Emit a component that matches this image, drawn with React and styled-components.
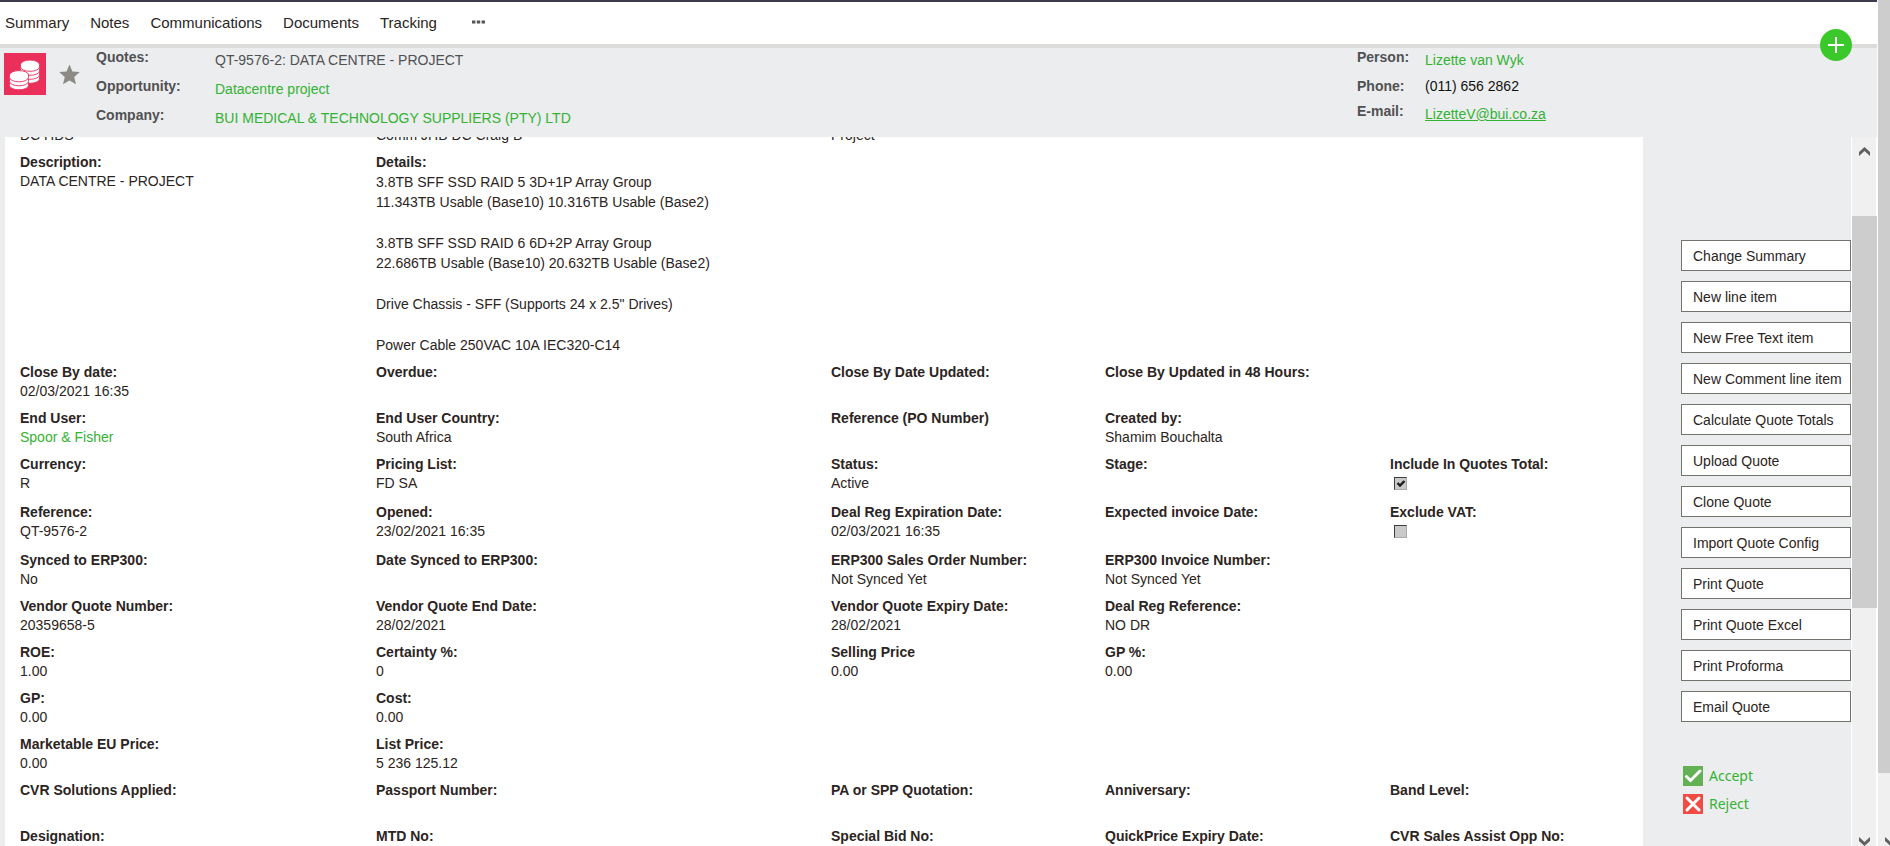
import React from 'react';
import styled, { createGlobalStyle } from 'styled-components';

const GlobalStyle = createGlobalStyle`
  * {
    box-sizing: border-box;
  }
  body {
    margin: 0;
    background: #ebedee;
    color: #2b2422;
    font-family: "Liberation Sans", Arial, sans-serif;
    font-size: 14px;
  }
`;

const Page = styled.div`
  display: flex;
  height: 100vh;
  overflow: hidden;
`;
const Main = styled.div`
  position: relative;
  display: flex;
  flex: 1;
  flex-direction: column;
  min-width: 0;
`;

const Nav = styled.nav`
  display: flex;
  flex: none;
  align-items: center;
  gap: 21px;
  height: 48px;
  padding: 0 5px 4px;
  background: #fff;
  border-top: 2px solid #3b3b4b;
  border-bottom: 4px solid #dcdcda;
`;
const NavLink = styled.a`
  padding-top: 2px;
  color: #2b2422;
  font-size: 15px;
  text-decoration: none;
`;
const MoreButton = styled.button`
  display: flex;
  margin-left: 14px;
  padding: 2px 0 0;
  background: none;
  border: 0;
`;
const AddButton = styled.button`
  position: absolute;
  top: 29px;
  right: 25px;
  width: 32px;
  height: 32px;
  padding: 0;
  background: #3ac82b;
  border: 0;
  border-radius: 50%;
`;

const Banner = styled.header`
  display: flex;
  flex: none;
  height: 89px;
  padding-left: 4px;
`;
const LogoTile = styled.div`
  width: 42px;
  height: 42px;
  margin-top: 5px;
  background: #eb2f5b;
`;
const StarButton = styled.button`
  width: 21px;
  height: 21px;
  margin: 16px 16px 0 13px;
  padding: 0;
  background: none;
  border: 0;
`;
const InfoList = styled.dl`
  display: grid;
  flex: ${(props) => props.$grow};
  grid-template-columns: ${(props) => props.$labelWidth} 1fr;
  grid-template-rows: 29px ${(props) => props.$rowHeight} ${(props) => props.$rowHeight};
  margin: 0;
  color: #505155;
  line-height: 18px;
`;
const InfoLabel = styled.dt`
  font-weight: bold;
`;
const InfoValue = styled.dd`
  margin: 0;
  padding-top: ${(props) => (props.$plain ? '0' : '3px')};
  color: ${(props) => (props.$plain ? '#111' : 'inherit')};
`;
const GreenLink = styled.a`
  color: #34b233;
  text-decoration: ${(props) => (props.$underline ? 'underline' : 'none')};
`;

const Body = styled.div`
  display: flex;
  flex: 1;
  min-height: 0;
  overflow: hidden;
  padding-left: 5px;
`;
const Panel = styled.main`
  flex: 1;
  overflow: hidden;
  background: #fff;
  padding-left: 15px;
`;
/* the form is scrolled part of the way into its first row */
const Form = styled.div`
  margin-top: -30px;
`;
const Row = styled.div`
  display: grid;
  grid-template-columns: 356fr 455fr 274fr 285fr 253fr;
  min-height: ${(props) => (props.$tall ? '48px' : '46px')};
  padding-bottom: 8px;
`;
const Field = styled.div`
  min-width: 0;
`;
const FieldLabel = styled.label`
  display: block;
  font-weight: bold;
  line-height: 19px;
`;
const FieldValue = styled.div`
  line-height: 18px;
`;
const Details = styled.div`
  display: flex;
  flex-direction: column;
  gap: 21px;
  line-height: 20px;
`;
const CheckWrap = styled.span`
  position: relative;
  display: block;
  width: 13px;
  height: 13px;
  margin: 3px 4px;

  svg {
    position: absolute;
    top: 0;
    left: 0;
  }
`;
const Checkbox = styled.input`
  appearance: none;
  display: block;
  width: 13px;
  height: 13px;
  margin: 0;
  background: #c9c9c9;
  border: 1px solid #a9a9a9;
  border-top-color: #3c3c3c;
  border-left-color: #3c3c3c;
`;

const Sidebar = styled.aside`
  flex: none;
  width: 208px;
  padding: 103px 0 0 38px;
`;
const ButtonList = styled.div`
  display: flex;
  flex-direction: column;
  gap: 10px;
`;
const ActionButton = styled.button`
  height: 31px;
  padding: 0 0 0 11px;
  background: #fff;
  border: 1px solid #74746e;
  color: #2b2422;
  font: 14px "Liberation Sans", Arial, sans-serif;
  text-align: left;
  white-space: nowrap;
`;
const Decision = styled.div`
  display: flex;
  flex-direction: column;
  align-items: flex-start;
  gap: 8px;
  margin: 44px 0 0 2px;
`;
const DecisionLink = styled.a`
  display: flex;
  align-items: center;
  gap: 6px;
  height: 20px;
  color: #34b233;
  font: 14px/20px "Noto Sans", "Open Sans", sans-serif;
  text-decoration: none;
`;

const ScrollTrack = styled.div`
  display: grid;
  flex: none;
  grid-template-rows: 79px 392fr 238fr;
  width: 26px;
  background: #f0f0f0;
  border: solid #fff;
  border-width: 0 1px;
`;
const PageScroll = styled.div`
  display: grid;
  flex: none;
  grid-template-rows: 773fr 73fr;
  width: 13px;
  overflow: hidden;
  background: #f0f0f0;
  border-left: 1px solid #fff;
`;
const Thumb = styled.div`
  background: #cdcdcd;
`;
const ArrowSlot = styled.div`
  display: flex;
  align-items: ${(props) => (props.$bottom ? 'flex-end' : 'flex-start')};
  padding: ${(props) => (props.$bottom ? '0 7px' : '10px 7px')};
`;

const navItems = ['Summary', 'Notes', 'Communications', 'Documents', 'Tracking'];

const details = [
  ['3.8TB SFF SSD RAID 5 3D+1P Array Group', '11.343TB Usable (Base10) 10.316TB Usable (Base2)'],
  ['3.8TB SFF SSD RAID 6 6D+2P Array Group', '22.686TB Usable (Base10) 20.632TB Usable (Base2)'],
  ['Drive Chassis - SFF (Supports 24 x 2.5" Drives)'],
  ['Power Cable 250VAC 10A IEC320-C14'],
];

const rows = [
  {
    fields: [
      { label: '', value: 'DC HDS' },
      { label: '', value: 'Comm JHB DC Craig B' },
      { label: '', value: 'Project' },
    ],
  },
  {
    fields: [
      { label: 'Description:', value: 'DATA CENTRE - PROJECT' },
      { label: 'Details:', details },
    ],
  },
  {
    fields: [
      { label: 'Close By date:', value: '02/03/2021 16:35' },
      { label: 'Overdue:' },
      { label: 'Close By Date Updated:' },
      { label: 'Close By Updated in 48 Hours:' },
    ],
  },
  {
    fields: [
      { label: 'End User:', value: 'Spoor & Fisher', link: true },
      { label: 'End User Country:', value: 'South Africa' },
      { label: 'Reference (PO Number)' },
      { label: 'Created by:', value: 'Shamim Bouchalta' },
    ],
  },
  {
    tall: true,
    fields: [
      { label: 'Currency:', value: 'R' },
      { label: 'Pricing List:', value: 'FD SA' },
      { label: 'Status:', value: 'Active' },
      { label: 'Stage:' },
      { label: 'Include In Quotes Total:', id: 'include-total', checked: true },
    ],
  },
  {
    tall: true,
    fields: [
      { label: 'Reference:', value: 'QT-9576-2' },
      { label: 'Opened:', value: '23/02/2021 16:35' },
      { label: 'Deal Reg Expiration Date:', value: '02/03/2021 16:35' },
      { label: 'Expected invoice Date:' },
      { label: 'Exclude VAT:', id: 'exclude-vat', checked: false },
    ],
  },
  {
    fields: [
      { label: 'Synced to ERP300:', value: 'No' },
      { label: 'Date Synced to ERP300:' },
      { label: 'ERP300 Sales Order Number:', value: 'Not Synced Yet' },
      { label: 'ERP300 Invoice Number:', value: 'Not Synced Yet' },
    ],
  },
  {
    fields: [
      { label: 'Vendor Quote Number:', value: '20359658-5' },
      { label: 'Vendor Quote End Date:', value: '28/02/2021' },
      { label: 'Vendor Quote Expiry Date:', value: '28/02/2021' },
      { label: 'Deal Reg Reference:', value: 'NO DR' },
    ],
  },
  {
    fields: [
      { label: 'ROE:', value: '1.00' },
      { label: 'Certainty %:', value: '0' },
      { label: 'Selling Price', value: '0.00' },
      { label: 'GP %:', value: '0.00' },
    ],
  },
  {
    fields: [
      { label: 'GP:', value: '0.00' },
      { label: 'Cost:', value: '0.00' },
    ],
  },
  {
    fields: [
      { label: 'Marketable EU Price:', value: '0.00' },
      { label: 'List Price:', value: '5 236 125.12' },
    ],
  },
  {
    fields: [
      { label: 'CVR Solutions Applied:' },
      { label: 'Passport Number:' },
      { label: 'PA or SPP Quotation:' },
      { label: 'Anniversary:' },
      { label: 'Band Level:' },
    ],
  },
  {
    fields: [
      { label: 'Designation:' },
      { label: 'MTD No:' },
      { label: 'Special Bid No:' },
      { label: 'QuickPrice Expiry Date:' },
      { label: 'CVR Sales Assist Opp No:' },
    ],
  },
];

const actions = [
  'Change Summary',
  'New line item',
  'New Free Text item',
  'New Comment line item',
  'Calculate Quote Totals',
  'Upload Quote',
  'Clone Quote',
  'Import Quote Config',
  'Print Quote',
  'Print Quote Excel',
  'Print Proforma',
  'Email Quote',
];

const CoinStack = ({ x, y, layers }) => (
  <g transform={`translate(${x} ${y})`}>
    {/* bottom coin first, so each one overlaps the coin below it */}
    {Array.from({ length: layers }, (_, i) => layers - 1 - i).map((i) => (
      <path
        key={i}
        d={`M0 ${i * 4} a9.5 4.4 0 0 1 19 0 v2.4 a9.5 4.4 0 0 1 -19 0 z`}
        fill="#fff"
        stroke="#eb2f5b"
        strokeWidth="0.9"
      />
    ))}
  </g>
);

const CoinsIcon = () => (
  <svg width="42" height="42" viewBox="0 0 42 42">
    <CoinStack x={16.5} y={11.5} layers={4} />
    <CoinStack x={5.5} y={22} layers={3} />
  </svg>
);

const Chevron = ({ down }) => (
  <svg width="11" height="9" viewBox="0 0 11 9">
    <path
      d={down ? 'M0 0 L5.5 5 L11 0 V4 L5.5 9 L0 4 Z' : 'M0 9 L5.5 4 L11 9 V5 L5.5 0 L0 5 Z'}
      fill="#606060"
    />
  </svg>
);

const FieldCell = ({ field }) => (
  <Field>
    <FieldLabel as={field.id ? 'label' : 'div'} htmlFor={field.id}>
      {field.label || '\u00a0'}
    </FieldLabel>
    {field.value && (
      <FieldValue>
        {field.link ? <GreenLink href="#">{field.value}</GreenLink> : field.value}
      </FieldValue>
    )}
    {field.details && (
      <Details>
        {field.details.map((lines) => (
          <div key={lines[0]}>
            {lines.map((line) => (
              <div key={line}>{line}</div>
            ))}
          </div>
        ))}
      </Details>
    )}
    {field.id && (
      <CheckWrap>
        <Checkbox type="checkbox" id={field.id} checked={field.checked} disabled readOnly />
        {field.checked && (
          <svg width="13" height="13" viewBox="0 0 13 13">
            <path d="M3.5 6 L6 8.5 L10.5 4" fill="none" stroke="#1c1c1c" strokeWidth="2.4" />
          </svg>
        )}
      </CheckWrap>
    )}
  </Field>
);

const App = () => (
  <>
    <GlobalStyle />
    <Page>
      <Main>
        <Nav>
          {navItems.map((item) => (
            <NavLink key={item} href="#">{item}</NavLink>
          ))}
          <MoreButton aria-label="More">
            <svg width="13" height="4" viewBox="0 0 13 4">
              <path d="M0 0.5h3.4v3H0z M4.8 0.5h3.4v3H4.8z M9.6 0.5H13v3H9.6z" fill="#555" />
            </svg>
          </MoreButton>
        </Nav>
        <Banner>
          <LogoTile>
            <CoinsIcon />
          </LogoTile>
          <StarButton aria-label="Favourite">
            <svg width="21" height="21" viewBox="0 0 21 21">
              <path
                d="M10.5 0.5 L13.4 7.4 L20.8 8 L15.2 12.9 L17 20.3 L10.5 16.4 L4 20.3 L5.8 12.9 L0.2 8 L7.6 7.4 Z"
                fill="#8b8a84"
              />
            </svg>
          </StarButton>
          <InfoList $grow={1261} $labelWidth="119px" $rowHeight="29px">
            <InfoLabel>Quotes:</InfoLabel>
            <InfoValue>QT-9576-2: DATA CENTRE - PROJECT</InfoValue>
            <InfoLabel>Opportunity:</InfoLabel>
            <InfoValue><GreenLink href="#">Datacentre project</GreenLink></InfoValue>
            <InfoLabel>Company:</InfoLabel>
            <InfoValue>
              <GreenLink href="#">BUI MEDICAL &amp; TECHNOLOGY SUPPLIERS (PTY) LTD</GreenLink>
            </InfoValue>
          </InfoList>
          <InfoList $grow={520} $labelWidth="68px" $rowHeight="25px">
            <InfoLabel>Person:</InfoLabel>
            <InfoValue><GreenLink href="#">Lizette van Wyk</GreenLink></InfoValue>
            <InfoLabel>Phone:</InfoLabel>
            <InfoValue $plain>(011) 656 2862</InfoValue>
            <InfoLabel>E-mail:</InfoLabel>
            <InfoValue><GreenLink $underline href="#">LizetteV@bui.co.za</GreenLink></InfoValue>
          </InfoList>
        </Banner>
        <Body>
          <Panel>
            <Form>
              {rows.map((row, index) => (
                <Row key={index} $tall={row.tall}>
                  {row.fields.map((field, i) => (
                    <FieldCell key={i} field={field} />
                  ))}
                </Row>
              ))}
            </Form>
          </Panel>
          <Sidebar>
            <ButtonList>
              {actions.map((action) => (
                <ActionButton key={action}>{action}</ActionButton>
              ))}
            </ButtonList>
            <Decision>
              <DecisionLink href="#">
                <svg width="20" height="20" viewBox="0 0 20 20">
                  <rect width="20" height="20" fill="#63b155" />
                  <path d="M3.5 10.5 L7.5 14.5 L17 5" fill="none" stroke="#fff" strokeWidth="3" strokeLinecap="round" />
                </svg>
                Accept
              </DecisionLink>
              <DecisionLink href="#">
                <svg width="20" height="20" viewBox="0 0 20 20">
                  <rect width="20" height="20" fill="#f04b45" />
                  <path d="M4 4 L16 16 M16 4 L4 16" stroke="#fff" strokeWidth="3" strokeLinecap="round" />
                </svg>
                Reject
              </DecisionLink>
            </Decision>
          </Sidebar>
          <ScrollTrack>
            <ArrowSlot><Chevron /></ArrowSlot>
            <Thumb />
            <ArrowSlot $bottom><Chevron down /></ArrowSlot>
          </ScrollTrack>
        </Body>
        <AddButton aria-label="Add">
          <svg width="32" height="32" viewBox="0 0 32 32">
            <path d="M8 16 H24 M16 8 V24" stroke="#fff" strokeWidth="2" />
          </svg>
        </AddButton>
      </Main>
      <PageScroll>
        <Thumb />
        <ArrowSlot $bottom><Chevron down /></ArrowSlot>
      </PageScroll>
    </Page>
  </>
);
export default App;
